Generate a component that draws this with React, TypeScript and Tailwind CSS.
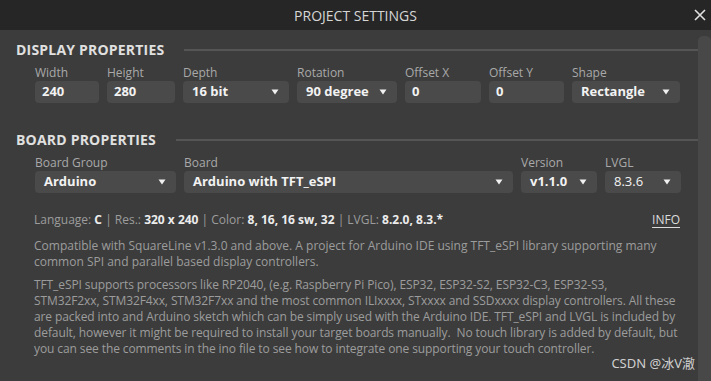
import React from 'react';

const Arrow = () => (
  <svg width="8" height="6" viewBox="0 0 8 6" className="shrink-0">
    <path d="M0.5 0.5 L7.5 0.5 L4 5.5 Z" fill="#f0f0f0" />
  </svg>
);

function TextField({ label, value, w }: { label: string; value: string; w: string }) {
  return (
    <div className={`flex flex-col ${w}`}>
      <span className="text-[12px] leading-4 text-[#a9a9a9]">{label}</span>
      <div className="h-[22px] rounded-[4px] bg-[#4a4a4a] pl-[7px] flex items-center text-[13px] font-bold text-[#f2f2f2]">
        {value}
      </div>
    </div>
  );
}

function SelectField({ label, value, w, light }: { label: string; value: string; w: string; light?: boolean }) {
  return (
    <div className={`flex flex-col ${w}`}>
      <span className="text-[12px] leading-4 text-[#a9a9a9]">{label}</span>
      <div className="h-[22px] rounded-[4px] bg-[#4a4a4a] pl-[9px] pr-[10px] flex items-center justify-between text-[13px] text-[#f2f2f2]">
        <span className={light ? 'font-normal' : 'font-bold'}>{value}</span>
        <Arrow />
      </div>
    </div>
  );
}

function SectionTitle({ title }: { title: string }) {
  return (
    <div className="flex items-center gap-[20px] h-[20px]">
      <span className="text-[14px] leading-5 font-bold text-[#e0e0e0] tracking-[0.2px]">{title}</span>
      <div className="flex-1 h-[2px] bg-[#555555]" />
    </div>
  );
}

export default function App() {
  return (
    <div
      className="relative w-[711px] h-[381px] overflow-hidden bg-[#3c3c3c]"
      style={{ fontFamily: '"Open Sans", "Noto Sans", sans-serif' }}
    >
      <div className="relative h-[30px] bg-[#262626] flex items-center justify-center">
        <span className="text-[14px] text-[#d6d6d6]">PROJECT SETTINGS</span>
        <svg width="12" height="12" viewBox="0 0 12 12" className="absolute right-[5px] top-[9px]">
          <path d="M1 1 L11 11 M11 1 L1 11" stroke="#e0e0e0" strokeWidth="1.6" />
        </svg>
      </div>

      <div className="flex h-[351px]">
        <div className="flex-1 pl-[16px] pt-[10px]">
          <SectionTitle title="DISPLAY PROPERTIES" />
          <div className="mt-[5px] pl-[19px] flex gap-[8px]">
            <TextField label="Width" value="240" w="w-[64px]" />
            <TextField label="Height" value="280" w="w-[68px]" />
            <SelectField label="Depth" value="16 bit" w="w-[106px]" />
            <SelectField label="Rotation" value="90 degree" w="w-[100px]" />
            <TextField label="Offset X" value="0" w="w-[76px]" />
            <TextField label="Offset Y" value="0" w="w-[75px]" />
            <SelectField label="Shape" value="Rectangle" w="w-[108px]" />
          </div>

          <div className="mt-[27px]">
            <SectionTitle title="BOARD PROPERTIES" />
          </div>
          <div className="mt-[5px] pl-[19px] flex gap-[8px]">
            <SelectField label="Board Group" value="Arduino" w="w-[141px]" />
            <SelectField label="Board" value="Arduino with TFT_eSPI" w="w-[329px]" />
            <SelectField label="Version" value="v1.1.0" w="w-[76px]" />
            <SelectField label="LVGL" value="8.3.6" w="w-[76px]" light />
          </div>

          <div className="pl-[18px] w-[666px] text-[12px] leading-4 text-[#9c9c9c]">
            <div className="mt-[19px] flex justify-between">
              <span>
                Language: <b className="text-[#ececec]">C</b> | Res.: <b className="text-[#ececec]">320 x 240</b> | Color:{' '}
                <b className="text-[#ececec]">8, 16, 16 sw, 32</b> | LVGL: <b className="text-[#ececec]">8.2.0, 8.3.*</b>
              </span>
              <span className="text-[#dcdcdc] underline underline-offset-[3px] mr-[2px]">INFO</span>
            </div>
            <p className="mt-[10px] whitespace-nowrap">
              Compatible with SquareLine v1.3.0 and above. A project for Arduino IDE using TFT_eSPI library supporting many
              <br />
              common SPI and parallel based display controllers.
            </p>
            <p className="mt-[7px] whitespace-nowrap tracking-[-0.1px]">
              TFT_eSPI supports processors like RP2040, (e.g. Raspberry Pi Pico), ESP32, ESP32-S2, ESP32-C3, ESP32-S3,
              <br />
              STM32F2xx, STM32F4xx, STM32F7xx and the most common ILIxxxx, STxxxx and SSDxxxx display controllers. All these
              <br />
              are packed into and Arduino sketch which can be simply used with the Arduino IDE. TFT_eSPI and LVGL is included by
              <br />
              default, however it might be required to install your target boards manually.&nbsp; No touch library is added by default, but
              <br />
              you can see the comments in the ino file to see how to integrate one supporting your touch controller.
            </p>
          </div>
        </div>
        <div className="w-[13px] mt-[6px] rounded-t-[5px] bg-[#484848]" />
      </div>

      <span
        className="absolute right-[16px] top-[355px] text-[13px] leading-4 text-[#cfcfcf]"
        style={{ fontFamily: '"Noto Sans", "Noto Sans CJK SC", sans-serif' }}
      >
        CSDN @冰V澈
      </span>
    </div>
  );
}
